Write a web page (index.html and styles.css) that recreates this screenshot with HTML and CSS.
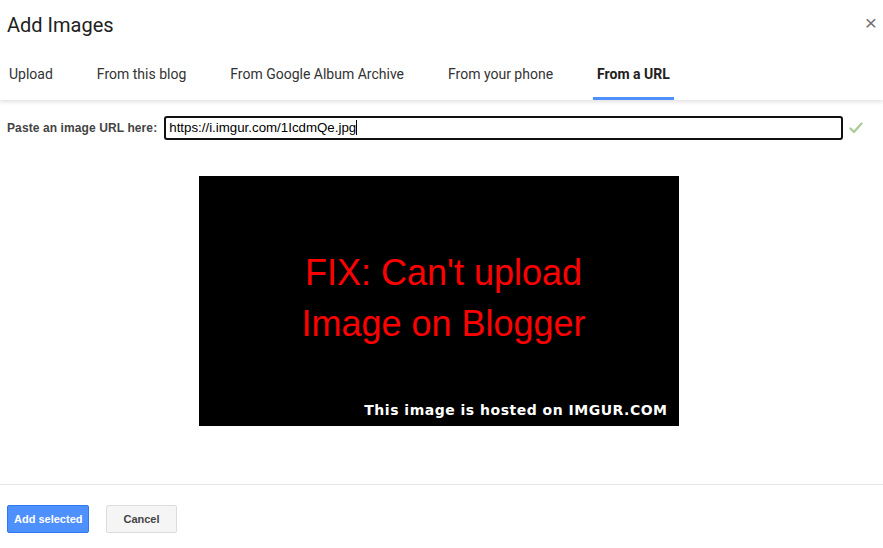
FILE: index.html
```html
<!DOCTYPE html>
<html lang="en">

<head>
  <meta charset="UTF-8">
  <title>Add Images</title>
  <link rel="stylesheet" href="styles.css">
</head>

<body>
  <div class="picker">
    <header class="picker-header">
      <div class="title-row">
        <h2>Add Images</h2>
        <span class="close">&times;</span>
      </div>
      <nav class="tabs">
        <a class="tab">Upload</a>
        <a class="tab">From this blog</a>
        <a class="tab">From Google Album Archive</a>
        <a class="tab">From your phone</a>
        <a class="tab active">From a URL</a>
      </nav>
    </header>

    <div class="url-pane">
      <div class="url-row">
        <label for="imageUrl">Paste an image URL here:</label>
        <div class="url-box" id="imageUrl">https://i.imgur.com/1IcdmQe.jpg<span class="caret"></span></div>
        <svg class="ok" width="14" height="14" viewBox="0 0 14 14">
          <path d="M1.5 7.5 L5 11 L12.5 2.5" fill="none" stroke="#a7cc96" stroke-width="2.2" stroke-linecap="round" stroke-linejoin="round"/>
        </svg>
      </div>

      <div class="preview">
        <div class="preview-title">FIX: Can't upload<br>Image on Blogger</div>
        <div class="preview-credit">This image is hosted on IMGUR.COM</div>
      </div>
    </div>

    <footer class="picker-footer">
      <button class="btn btn-primary">Add selected</button>
      <button class="btn">Cancel</button>
    </footer>
  </div>
</body>

</html>
```

FILE: styles.css
```css
body {
  margin: 0;
  background-color: #fff;
  font-family: Roboto, Arial, sans-serif;
}
.picker {
  width: 883px;
  height: 548px;
  display: flex;
  flex-direction: column;
}
.picker-header {
  box-shadow: 0 2px 4px rgba(0, 0, 0, 0.12);
  position: relative;
  z-index: 1;
}
.title-row {
  display: flex;
  justify-content: space-between;
  align-items: flex-start;
  padding: 11px 6px 0 7px;
  height: 41px;
}
.title-row h2 {
  margin: 0;
  font-size: 20px;
  font-weight: 400;
  line-height: 28px;
  color: #212121;
}
.close {
  font-family: Arial, sans-serif;
  font-size: 21px;
  line-height: 22px;
  color: #707070;
  margin-top: 1px;
}
.tabs {
  display: flex;
  gap: 36px;
  padding-left: 5px;
  height: 48px;
}
.tab {
  padding: 14px 4px 0;
  font-size: 14px;
  color: #333;
  border-bottom: 3px solid transparent;
}
.tab.active {
  font-weight: 700;
  color: #212121;
  border-bottom-color: #4d90fe;
}
.url-pane {
  flex: 1;
  display: flex;
  flex-direction: column;
  align-items: center;
  border-bottom: 1px solid #e5e5e5;
}
.url-row {
  align-self: stretch;
  display: flex;
  align-items: center;
  padding: 16px 0 0 7px;
  font-family: Arial, "Liberation Sans", sans-serif;
}
.url-row label {
  font-size: 12px;
  font-weight: 700;
  color: #444;
  letter-spacing: 0.1px;
  margin-right: 7px;
}
.url-box {
  width: 669px;
  height: 20px;
  line-height: 20px;
  border: 2px solid #111;
  border-radius: 3px;
  padding: 0 3px;
  font-size: 13.3px;
  color: #000;
}
.caret {
  display: inline-block;
  width: 1px;
  height: 15px;
  background-color: #000;
  vertical-align: -3px;
}
.ok {
  margin-left: 6px;
}
.preview {
  margin: 36px 0 0 -6px;
  width: 480px;
  height: 250px;
  background-color: #000;
  display: flex;
  flex-direction: column;
  align-items: center;
}
.preview-title {
  margin: 71px 0 0 10px;
  font-family: Arial, "Liberation Sans", sans-serif;
  font-size: 36px;
  line-height: 51px;
  color: #f00;
  text-align: center;
}
.preview-credit {
  align-self: flex-end;
  margin: auto 11px 8px 0;
  font-family: "DejaVu Sans", sans-serif;
  font-weight: 700;
  font-size: 14px;
  color: #fff;
  letter-spacing: 0.5px;
}
.picker-footer {
  height: 63px;
  display: flex;
  align-items: flex-start;
  gap: 17px;
  padding: 20px 0 0 7px;
  box-sizing: border-box;
}
.btn {
  height: 28px;
  padding: 0 16px;
  font-family: Arial, "Liberation Sans", sans-serif;
  font-size: 11px;
  font-weight: 700;
  color: #444;
  background-color: #f5f5f5;
  border: 1px solid #dcdcdc;
  border-radius: 2px;
}
.btn-primary {
  padding: 0 6px;
  color: #fff;
  background-color: #4d90fe;
  border-color: #3079ed;
}
```
